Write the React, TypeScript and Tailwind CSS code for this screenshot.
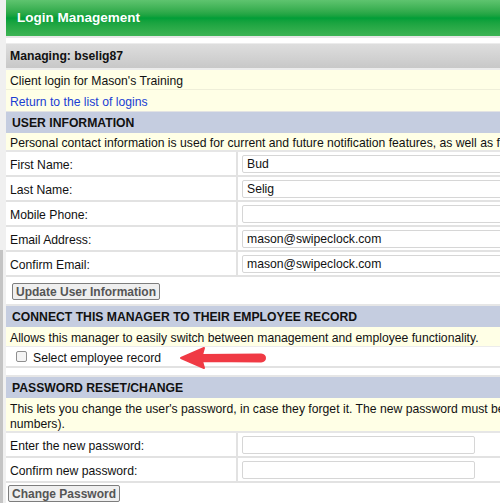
export default function App() {
  const userRows = [
    { label: "First Name:", value: "Bud" },
    { label: "Last Name:", value: "Selig" },
    { label: "Mobile Phone:", value: "" },
    { label: "Email Address:", value: "mason@swipeclock.com" },
    { label: "Confirm Email:", value: "mason@swipeclock.com" },
  ];
  const passwordRows = ["Enter the new password:", "Confirm new password:"];

  return (
    <div className="flex w-[500px] h-[503px] overflow-hidden bg-white font-['Liberation_Sans',Arial,sans-serif] text-[12.2px] text-[#111]">
      {/* left frame strip */}
      <div className="flex flex-col w-[6px] shrink-0 bg-[#f0f0f0]">
        <div className="h-[250px]" />
        <div className="flex-1 w-[3px] bg-[#c4c4c4]" />
      </div>

      <div className="w-[540px] shrink-0 overflow-hidden">
        {/* Green header */}
        <div className="h-[36px] flex items-center pl-[11px] bg-gradient-to-b from-[#5ec46f] via-[#009e38] to-[#3cb454] text-white font-bold text-[13.5px]">
          Login Management
        </div>
        <div className="h-[2px] bg-[#e6e6e6]" />
        <div className="h-[5px]" />

        {/* Managing bar */}
        <div className="h-[25px] flex items-center pl-[4px] border-t border-[#ececec] bg-gradient-to-b from-[#dedede] to-[#c8c8c8] font-bold">
          Managing: bselig87
        </div>
        <div className="h-[2px] bg-[#ececec]" />

        <div className="h-[20px] flex items-center pl-[4px] pt-[3px] bg-[#ffffe6] border-b border-[#efefd9]">
          Client login for Mason's Training
        </div>
        <div className="h-[21px] flex items-center pl-[4px] pt-[3px] bg-[#ffffe6] text-[#1a3ed4]">
          Return to the list of logins
        </div>

        {/* USER INFORMATION */}
        <div className="h-[22px] flex items-center pl-[6px] pt-[2px] bg-[#c5cde0] font-bold border-t border-[#e3e3e3]">
          USER INFORMATION
        </div>
        <div className="h-[19px] flex items-center pl-[4px] pt-[3px] bg-[#ffffe6] border-b-2 border-[#e6e6e6] whitespace-nowrap">
          Personal contact information is used for current and future notification features, as well as for
        </div>
        {userRows.map((r) => (
          <div key={r.label} className="h-[25px] flex border-b-2 border-[#e2e2e2]">
            <div className="w-[232px] shrink-0 flex items-center pl-[4px] pt-[4px] border-r-2 border-[#e2e2e2]">
              {r.label}
            </div>
            <div className="flex items-center pl-[4px]">
              <div className="w-[290px] h-[18px] flex items-center pl-[4px] pt-[2px] border border-[#d6d6d6] rounded-[2px]">
                {r.value}
              </div>
            </div>
          </div>
        ))}
        <div className="h-[27px] flex items-center pl-[6px] pt-[1px]">
          <button className="h-[17px] px-[3px] pt-[1px] flex items-center border border-[#7d7d7d] rounded-[2px] bg-[#efefef] text-[#555] font-bold text-[12px] leading-none">
            Update User Information
          </button>
        </div>

        {/* CONNECT */}
        <div className="h-[2px] bg-[#e6e6e6]" />
        <div className="h-[21px] flex items-center pl-[6px] pt-[2px] bg-[#c5cde0] font-bold">
          CONNECT THIS MANAGER TO THEIR EMPLOYEE RECORD
        </div>
        <div className="h-[20px] flex items-center pl-[4px] pt-[3px] bg-[#ffffe6] border-b border-[#ececec]">
          Allows this manager to easily switch between management and employee functionality.
        </div>
        <div className="relative h-[21px] flex items-center pl-[10px] gap-[6px] border-b-2 border-[#e2e2e2]">
          <span className="w-[11px] h-[11px] rounded-[2px] border border-[#8f8f8f] bg-[#f4f4f4]" />
          <span className="pt-[3px]">Select employee record</span>
          <svg className="absolute left-[171px] top-[-1px]" width="92" height="24" viewBox="0 0 92 24">
            <path d="M4 12 L27 2 L25 9 L84 8.5 Q88 9 88 12 Q88 15 84 15.5 L25 15 L27 22 Z" fill="#f03a44" stroke="#f03a44" strokeWidth="2" strokeLinejoin="round" />
          </svg>
        </div>
        <div className="h-[7px]" />

        {/* PASSWORD */}
        <div className="h-[2px] bg-[#e6e6e6]" />
        <div className="h-[21px] flex items-center pl-[6px] pt-[2px] bg-[#c5cde0] font-bold">
          PASSWORD RESET/CHANGE
        </div>
        <div className="h-[35px] pl-[4px] pt-[4px] bg-[#ffffe6] leading-[15px] border-b-2 border-[#e6e6e6] whitespace-nowrap">
          This lets you change the user's password, in case they forget it. The new password must be
          <br />
          numbers).
        </div>
        {passwordRows.map((label) => (
          <div key={label} className="h-[25px] flex border-b-2 border-[#e2e2e2]">
            <div className="w-[232px] shrink-0 flex items-center pl-[4px] pt-[4px] border-r-2 border-[#e2e2e2]">
              {label}
            </div>
            <div className="flex items-center pl-[4px]">
              <div className="w-[233px] h-[18px] border border-[#d6d6d6] rounded-[2px]" />
            </div>
          </div>
        ))}
        <div className="h-[20px] flex items-center pl-[2px]">
          <button className="h-[17px] px-[3px] pt-[1px] flex items-center border border-[#7d7d7d] rounded-[2px] bg-[#efefef] text-[#555] font-bold text-[12px] leading-none">
            Change Password
          </button>
        </div>
      </div>
    </div>
  );
}
